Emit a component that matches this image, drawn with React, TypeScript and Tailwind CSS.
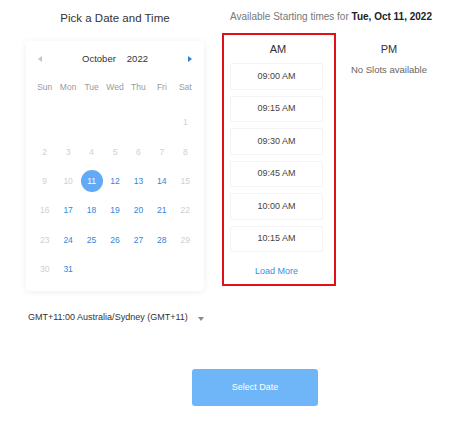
import React from 'react';

const weekdays = ['Sun', 'Mon', 'Tue', 'Wed', 'Thu', 'Fri', 'Sat'];

// October 2022 laid out as weeks; null = empty cell
const weeks: (number | null)[][] = [
  [null, null, null, null, null, null, 1],
  [2, 3, 4, 5, 6, 7, 8],
  [9, 10, 11, 12, 13, 14, 15],
  [16, 17, 18, 19, 20, 21, 22],
  [23, 24, 25, 26, 27, 28, 29],
  [30, 31, null, null, null, null, null],
];

const slots = ['09:00 AM', '09:15 AM', '09:30 AM', '09:45 AM', '10:00 AM', '10:15 AM'];

function isAvailable(day: number, col: number) {
  return day >= 12 && col > 0 && col < 6;
}

function DayCell({ day, col }: { day: number | null; col: number }) {
  if (day === null) return <div className="h-[29.4px]" />;
  if (day === 11) {
    return (
      <div className="h-[29.4px] flex items-center justify-center">
        <span className="w-[22px] h-[22px] rounded-full bg-[#62a9f6] text-white text-[8.5px] flex items-center justify-center">
          11
        </span>
      </div>
    );
  }
  return (
    <div
      className={`h-[29.4px] flex items-center justify-center text-[8.5px] ${
        isAvailable(day, col) ? 'text-[#2f86de]' : 'text-[#cfcfcf]'
      }`}
    >
      {day}
    </div>
  );
}

function Calendar() {
  return (
    <div className="mt-[15px] w-[178px] rounded-[4px] bg-white px-[7px] pt-[8px] pb-[7px] shadow-[0_1px_7px_rgba(0,0,0,0.07)]">
      <div className="h-[20px] flex items-center justify-between px-[5px]">
        <svg width="4" height="6" viewBox="0 0 4 6">
          <path d="M4 0 L0 3 L4 6 Z" fill="#c4c4c4" />
        </svg>
        <div className="flex gap-[11px] text-[9.5px] text-[#333]">
          <span>October</span>
          <span>2022</span>
        </div>
        <svg width="4" height="6" viewBox="0 0 4 6">
          <path d="M0 0 L4 3 L0 6 Z" fill="#2f7fd6" />
        </svg>
      </div>
      <div className="mt-[8px] grid grid-cols-7 h-[20px] items-center text-[8.5px] text-[#9a9a9a]">
        {weekdays.map((d) => (
          <span key={d} className="text-center">
            {d}
          </span>
        ))}
      </div>
      <div className="mt-[11px] grid grid-cols-7">
        {weeks.map((week, wi) =>
          week.map((day, col) => <DayCell key={`${wi}-${col}`} day={day} col={col} />)
        )}
      </div>
    </div>
  );
}

function TimeColumn() {
  return (
    <div className="w-[114px] h-[253px] border-2 border-[#e3101a] pt-[7px]">
      <div className="h-[14px] leading-[14px] text-center text-[11px] text-[#333] pr-[2px]">AM</div>
      <div className="mt-[7px] ml-[6px] w-[93px] flex flex-col gap-[6px]">
        {slots.map((s) => (
          <div
            key={s}
            className="h-[26.5px] flex items-center justify-center rounded-[2px] border border-[#f3f3f3] text-[9px] text-[#444]"
          >
            {s}
          </div>
        ))}
        <div className="h-[26.5px] flex items-center justify-center text-[9px] text-[#3a8ee6]">Load More</div>
      </div>
    </div>
  );
}

export default function App() {
  return (
    <div className="w-[474px] h-[422px] bg-white font-['Liberation_Sans',Arial,sans-serif]">
      <div className="flex pl-[26px]">
        <div className="w-[178px]">
          <div className="mt-[10px] h-[16px] leading-[16px] text-center text-[11.5px] text-[#333]">
            Pick a Date and Time
          </div>
          <Calendar />
        </div>
        <div className="ml-[18px]">
          <div className="mt-[10px] h-[14px] leading-[14px] pl-[8px] text-[10px] text-[#777] whitespace-nowrap">
            Available Starting times for <span className="font-bold text-[#222]">Tue, Oct 11, 2022</span>
          </div>
          <div className="mt-[9px] flex">
            <TimeColumn />
            <div className="w-[106px] pt-[9px] flex flex-col items-center">
              <div className="h-[14px] leading-[14px] text-[11px] text-[#333]">PM</div>
              <div className="mt-[7px] text-[9.5px] text-[#666]">No Slots available</div>
            </div>
          </div>
        </div>
      </div>
      <div className="mt-[18px] h-[16px] pl-[28px] flex items-center text-[9px] text-[#333]">
        <span>GMT+11:00 Australia/Sydney (GMT+11)</span>
        <svg className="ml-[10px] mt-[3px]" width="6" height="4" viewBox="0 0 6 4">
          <path d="M0 0 L6 0 L3 4 Z" fill="#8a8a8a" />
        </svg>
      </div>
      <div className="mt-[44px] pl-[192px]">
        <button className="w-[126px] h-[37px] rounded-[3px] bg-[#6fb6f8] text-white text-[9px]">
          Select Date
        </button>
      </div>
    </div>
  );
}
